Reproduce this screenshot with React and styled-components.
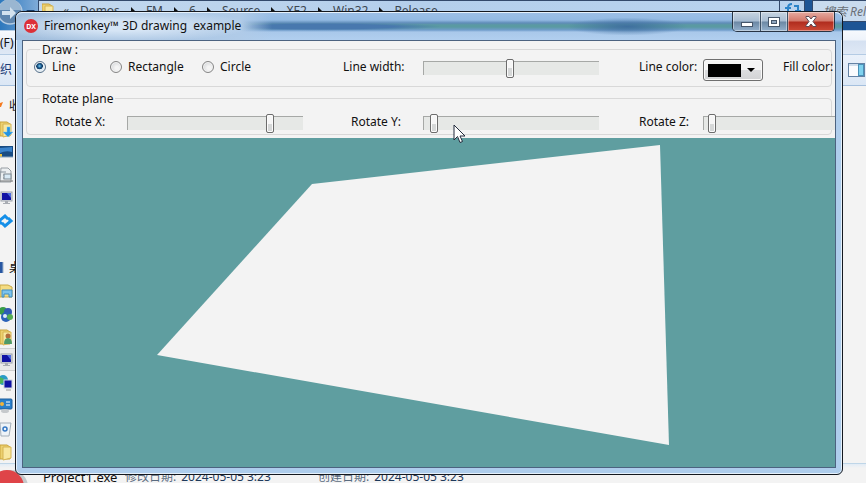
import React from 'react'
import styled, { createGlobalStyle } from 'styled-components'

const GlobalStyle = createGlobalStyle`
  * { box-sizing: border-box; }
  body {
    margin: 0;
    font-family: "Noto Sans", "Noto Sans CJK SC", sans-serif;
    font-size: 12px;
    line-height: 16px;
    color: #111;
  }
`

/* explorer window at the back */
const Desktop = styled.div`
  position: relative;
  display: flex;
  flex-direction: column;
  min-height: 100vh;
  overflow: hidden;
  background: #f3f3f3;
`
const AddressRow = styled.div`
  display: flex;
  align-items: flex-start;
  height: 31px;
  background: linear-gradient(90deg, #2d78bd 0, #7fabd8 38px, #7fabd8 60%, #1d5595 93%);
  border-bottom: 1px solid #b9cfe6;
`
const NavButton = styled.button`
  flex: none;
  width: 38px;
  height: 30px;
  padding: 0;
  border: 0;
  background: none;
`
const AddressBar = styled.nav`
  flex: 1;
  display: flex;
  align-items: center;
  height: 22px;
  padding-left: 3px;
  overflow: hidden;
  border: 1px solid #33496b;
  background: linear-gradient(90deg, #c3d8ee, #b4cfec 50%, #b9d3ee);
`
const Crumb = styled.a`
  margin-right: 11px;
  color: #3c4650;
  text-decoration: none;
  white-space: nowrap;
`
const Caret = styled.span`
  width: 0;
  height: 0;
  margin-right: 11px;
  border: 4px solid transparent;
  border-left-color: #111;
  border-right: 0;
`
const RefreshButton = styled.button`
  width: 25px;
  height: 20px;
  margin-left: auto;
  padding: 0;
  border: 0;
  border-left: 1px solid #33496b;
  background: none;
`
const SearchBox = styled.input`
  width: 54px;
  height: 22px;
  margin: 0 0 0 7px;
  padding: 0 0 0 10px;
  border: 1px solid #33496b;
  border-right: 0;
  background: #c9dbee;
  font: italic 12px "Noto Sans", "Noto Sans CJK SC", sans-serif;
  &::placeholder { color: #6a6f76; }
`
const MenuRow = styled.div`
  height: 23px;
  padding-top: 4px;
  background: linear-gradient(#f6f9fd 0, #eef3fa 9px, #d5e1f1 10px, #dfe8f5 100%);
`
const ToolRow = styled.div`
  display: flex;
  align-items: center;
  justify-content: space-between;
  height: 32px;
  padding-right: 1px;
  border-top: 1px solid #b4cbe4;
  border-bottom: 1px solid #a5c0de;
  background: linear-gradient(#eaf1fa, #dbe7f5);
  color: #1e3e78;
`
const PlainButton = styled.button`
  display: flex;
  padding: 0;
  border: 0;
  background: none;
  color: inherit;
  font: inherit;
`
const Places = styled.ul`
  flex: 1;
  width: 160px;
  margin: 0;
  padding: 8px 0 0;
  list-style: none;
`
const Place = styled.li`
  display: flex;
  align-items: center;
  gap: 2px;
  height: 23px;
  margin-top: ${p => (p.$group ? '24px' : '0')};
  background: ${p => (p.$selected ? '#e9e9e9' : 'none')};
  border: solid ${p => (p.$selected ? '#d0d0d0' : 'transparent')};
  border-width: 1px 0;
  svg { flex: none; }
`
const Details = styled.footer`
  display: flex;
  align-items: flex-end;
  height: 20px;
  border-top: 1px solid #bfd6e8;
  background: linear-gradient(#e2ecf6, #f3f3f3 4px);
  line-height: 12px;
  white-space: nowrap;
  svg { flex: none; margin-right: 14px; }
`
const FileName = styled.span`
  width: 82px;
  font-size: 13px;
`
const Stamp = styled.span`
  width: 193px;
  color: #1e395b;
`
const StampLabel = styled.span`
  margin-right: 5px;
  color: #5a6b80;
`

/* front window */
const Window = styled.main`
  position: absolute;
  inset: 11px 23px 8px 15px;
  display: flex;
  flex-direction: column;
  padding: 0 6px 6px;
  border: 1px solid #14181f;
  border-radius: 7px 7px 6px 6px;
  background: #aecdec;
  box-shadow: inset 0 0 0 1px #e6f1fb;
`
const TitleBar = styled.header`
  display: flex;
  align-items: center;
  height: 28px;
  margin: 0 -6px;
  padding: 0 7px 0 8px;
  border-radius: 6px 6px 0 0;
  box-shadow: inset 0 1px 0 #e6f1fb;
  background:
    radial-gradient(ellipse 130px 16px at 13% 50%, #d6e5f5 30%, transparent),
    linear-gradient(90deg, #a3bfdd 0, #b0cbe8 27%, transparent 31%),
    radial-gradient(ellipse 60px 9px at 74% 52%, #3f6f9f, transparent),
    radial-gradient(ellipse 120px 4px at 37% 52%, #4878ae 60%, transparent),
    linear-gradient(#9dbfe6 0, #93bae3 8px, #5f8cb8 11px, #5a9aa2 13px, #5a9aa2 15px, #6f9ccb 18px, #a9c8ea 20px, #b1cfef 100%);
`
const Title = styled.h1`
  flex: 1;
  margin: 0 0 0 6px;
  font-size: 12px;
  font-weight: 400;
  line-height: 16px;
  white-space: pre;
`
const Captions = styled.div`
  display: flex;
  align-self: flex-start;
  height: 20px;
  overflow: hidden;
  border: 1px solid #273444;
  border-top: 0;
  border-radius: 0 0 5px 5px;
`
const CaptionButton = styled.button`
  display: grid;
  place-items: center;
  width: ${p => (p.$close ? '47px' : '27px')};
  padding: 0;
  border: 0;
  border-left: ${p => (p.$first ? '0' : '1px solid #3e5166')};
  box-shadow: inset 0 0 0 1px rgba(255, 255, 255, 0.4);
  background: ${p => (p.$close
    ? 'linear-gradient(#e5aaa0, #d3796b 9px, #b02c1e 10px, #cc4a36 100%)'
    : 'linear-gradient(#c7d4e1, #a9bdd2 9px, #6c88a4 10px, #93b0cc 100%)')};
`
const Client = styled.div`
  flex: 1;
  display: flex;
  flex-direction: column;
  min-height: 0;
  overflow: hidden;
  border: 1px solid #4c6380;
  background: #f3f3f3;
`
const Panel = styled.form`
  display: flex;
  flex-direction: column;
  gap: 3px;
  padding: 0 3px 3px;
`
const Group = styled.fieldset`
  min-width: 0;
  margin: 0;
  padding: 0;
  border: 1px solid #d8d8d8;
  border-radius: 4px;
`
const Legend = styled.legend`
  margin-left: 13px;
  padding: 2px 2px 0;
  line-height: 14px;
`
const DrawRow = styled.div`
  display: grid;
  grid-template-columns: 76px 92px 141px 80px 176px 40px 64px 80px max-content;
  align-items: start;
  padding: 2px 0 5px 7px;
`
const RotateRow = styled.div`
  display: grid;
  grid-template-columns: 72px 176px 48px 72px 176px 40px 64px 176px;
  align-items: start;
  padding: 8px 0 2px 28px;
`
const Label = styled.label`
  display: flex;
  align-items: center;
  white-space: nowrap;
`
const Radio = styled.input.attrs({ type: 'radio' })`
  appearance: none;
  flex: none;
  width: 12px;
  height: 12px;
  margin: 0 6px 0 0;
  border: 1px solid #858585;
  border-radius: 50%;
  background: radial-gradient(circle at 60% 60%, #f4f4f4 20%, #c9cccf);
  box-shadow: inset 0 0 0 1px #f4f4f4;
  &:checked {
    border-color: #56708a;
    background: radial-gradient(circle at 45% 40%, #7fd0f0 0, #1c5f94 22%, #12385e 38%, #dcebf5 44%);
  }
`
const Slider = styled.input.attrs({ type: 'range', max: 168 })`
  appearance: none;
  width: 176px;
  height: 18px;
  margin: 0;
  background: none;
  &::-webkit-slider-runnable-track {
    height: 14px;
    border: solid #a6a8a6;
    border-width: 1px 0 0 1px;
    background: #e6e8e6;
  }
  &::-webkit-slider-thumb {
    appearance: none;
    width: 8px;
    height: 19px;
    margin-top: -3px;
    border: 1px solid #6c6c6c;
    border-radius: 2px;
    background: linear-gradient(#f6f6f6 50%, #d6d8d8 50%);
    box-shadow: inset 0 0 0 1px #fbfbfb;
  }
`
const ColorButton = styled.button`
  display: flex;
  align-items: center;
  justify-content: space-between;
  width: 60px;
  height: 22px;
  padding: 0 7px 0 4px;
  border: 1px solid #6f6f6f;
  border-radius: 3px;
  background: linear-gradient(#f4f4f4 50%, #dcdddf 50%, #d2d3d5);
  box-shadow: inset 0 0 0 1px #fafafa;
`
const Swatch = styled.span`
  width: 33px;
  height: 13px;
  background: ${p => p.$color};
`
const DropArrow = styled.span`
  border: 4px solid transparent;
  border-top-color: #000;
  border-bottom: 0;
`
const Scene = styled.svg`
  flex: 1;
  display: block;
  width: 100%;
  min-height: 0;
  background: #5f9ea0;
`
const Pointer = styled.svg`
  position: absolute;
  left: 437px;
  top: 112px;
  pointer-events: none;
`

const crumbs = ['Demos', 'FM', '6', 'Source', 'XE2', 'Win32', 'Release']

const Folder = () => (
  <g>
    <path d="M0 2h7l3 2v12H0z" fill="#ecd06f" stroke="#c9a33c" />
    <path d="M3 4h8v11l-8 2z" fill="#f8e7a0" stroke="#d6b452" />
  </g>
)
const Monitor = () => (
  <g>
    <rect x="1" y="3" width="11" height="9" fill="#e4e6ea" stroke="#9ba1ab" />
    <rect x="2" y="4" width="9" height="7" fill="#1012a4" />
    <path d="M7 4h4v5z" fill="#4c6be0" />
    <path d="M5 12h3v2h2v1H3v-1h2z" fill="#a9adb3" />
  </g>
)

const places = [
  { art: <path d="M0 6l3-1-2 5H0z" fill="#f47a20" />, text: '收' },
  { art: <g><Folder /><path d="M7 7h3v5h3l-5 5-5-5h4z" fill="#2492e0" stroke="#78c4f2" strokeWidth=".5" /></g> },
  { art: <g><path d="M0 3h13v11H0z" fill="#194c83" /><path d="M0 5l12-1v5q-6-2-12 1z" fill="#3a83cc" /><path d="M0 11h2v3H0z" fill="#efc33b" /><path d="M0 14h13" stroke="#8ba6c0" /></g> },
  { art: <g><path d="M1 2h7l3 3v11H0z" fill="#eceff1" stroke="#969da3" /><path d="M0 6h6M3 9h7M3 12h7" stroke="#88939c" /><rect x="4" y="8" width="7" height="5" fill="#d8e9f4" stroke="#7d8790" /><path d="M0 15h13" stroke="#777" /></g> },
  { art: <Monitor /> },
  { art: <g fill="none" stroke="#158fe8" strokeWidth="3"><path d="M8 7L5 4-1 9l3 3" /><path d="M2 11l3 3 6-5-3-3" /></g> },
  { group: true, art: <g><path d="M-2 3H3v11h-5z" fill="#2857a2" /><path d="M3 3v11" stroke="#9fb4cc" /></g>, text: '桌' },
  { art: <g><path d="M0 3h8l4 2v10H0z" fill="#f4dc83" stroke="#c8a847" /><path d="M2 8h10v7h-3v-3H4v3H2z" fill="#7cc3ec" stroke="#3f8dc2" /></g> },
  { art: <g><circle cx="3" cy="6" r="4" fill="#399d48" /><circle cx="8" cy="7" r="4" fill="#3159b3" /><circle cx="6" cy="12" r="5" fill="#2b61b8" /><circle cx="10" cy="12" r="3" fill="#55ad53" /><circle cx="5" cy="11" r="2" fill="#dfecfa" /></g> },
  { art: <g><Folder /><circle cx="8" cy="8" r="2.5" fill="#b06c3c" /><path d="M4 16q0-6 4-6t4 6z" fill="#4f9a68" /></g> },
  { selected: true, art: <Monitor /> },
  { art: <g><circle cx="3" cy="6" r="5" fill="#2a9bc6" /><path d="M0 3l4 2-1 4-3 1z" fill="#4fb55a" /><rect x="4" y="6" width="8" height="8" fill="#1012a4" stroke="#ccd3dd" /><path d="M6 16h5" stroke="#999" /></g> },
  { art: <g><rect x="-1" y="2" width="13" height="10" rx="1" fill="#2a80cc" stroke="#1e5c9a" /><circle cx="2" cy="7" r="2" fill="#f1b33c" /><path d="M6 5h4M6 8h4" stroke="#fff" /><ellipse cx="5" cy="14" rx="4" ry="2" fill="#c6c9cc" /></g> },
  { art: <g><path d="M0 3h11l-2 13H1z" fill="#eef3f8" stroke="#a4afba" /><circle cx="5" cy="9" r="2" fill="none" stroke="#3577c4" strokeWidth="1.5" /></g> },
  { art: <Folder /> }
]

class App extends React.Component {
  constructor(props) {
    super(props)
    this.state = { shape: 'Line' }
  }

  render() {
    return (
      <Desktop>
        <GlobalStyle />
        <AddressRow>
          <NavButton aria-label="Forward">
            <svg width="38" height="30" viewBox="0 0 38 30">
              <circle cx="10" cy="12" r="12" fill="#5e86af" stroke="#b4cbe2" strokeWidth="1.5" />
              <path d="M-1 10a11 11 0 0 1 22 0z" fill="#9ab6d1" />
              <path d="M2 11h8V7l6 6-6 6v-4H2z" fill="#d3e2ef" />
              <path d="M26 10h9l-4 4z" fill="#143d6c" />
            </svg>
          </NavButton>
          <AddressBar>
            <svg width="21" height="18" viewBox="0 0 21 18"><Folder /></svg>
            <Crumb href="#up">«</Crumb>
            {crumbs.map((name, i) => (
              <React.Fragment key={name}>
                {i > 0 && <Caret />}
                <Crumb href={'#' + name}>{name}</Crumb>
              </React.Fragment>
            ))}
            <RefreshButton aria-label="Refresh">
              <svg width="20" height="18" viewBox="0 0 20 18" fill="none" stroke="#2b83c8" strokeWidth="2">
                <path d="M10 3q-4 0-4 4v7M3 7h6M12 5h4v9M13 10h6" />
              </svg>
            </RefreshButton>
          </AddressBar>
          <SearchBox aria-label="Search" placeholder="搜索 Release" />
        </AddressRow>
        <MenuRow><PlainButton>(F)</PlainButton></MenuRow>
        <ToolRow>
          <PlainButton>织</PlainButton>
          <PlainButton aria-label="Preview pane">
            <svg width="17" height="14" viewBox="0 0 17 14">
              <rect x=".5" y=".5" width="16" height="13" fill="#fbfcfe" stroke="#6583a5" />
              <path d="M1 2h15" stroke="#aac3dc" />
              <rect x="10.5" y="1.5" width="5" height="11" fill="#80d2ef" stroke="#4a91b8" />
            </svg>
          </PlainButton>
        </ToolRow>
        <Places>
          {places.map((p, i) => (
            <Place key={i} $group={p.group} $selected={p.selected}>
              <svg width={p.text ? 7 : 14} height="18" viewBox={p.text ? '0 0 7 18' : '0 0 14 18'}>{p.art}</svg>
              {p.text}
            </Place>
          ))}
        </Places>
        <Details>
          <svg width="29" height="15" viewBox="0 0 29 15">
            <circle cx="11" cy="19" r="17" fill="#c4c8cb" />
            <circle cx="7" cy="19" r="17" fill="#df4448" />
          </svg>
          <FileName>Project1.exe</FileName>
          <Stamp><StampLabel>修改日期:</StampLabel>2024-05-05 3:23</Stamp>
          <Stamp><StampLabel>创建日期:</StampLabel>2024-05-05 3:23</Stamp>
        </Details>

        <Window>
          <TitleBar>
            <svg width="14" height="14" viewBox="0 0 14 14">
              <circle cx="7" cy="7" r="7" fill="#dc3038" />
              <text x="7" y="10" textAnchor="middle" fontSize="7" fontWeight="700" fill="#fff">DX</text>
            </svg>
            <Title>Firemonkey™ 3D drawing  example</Title>
            <Captions>
              <CaptionButton $first aria-label="Minimize">
                <svg width="12" height="14"><rect x=".5" y="7.5" width="11" height="4" fill="#fff" stroke="#46566a" /></svg>
              </CaptionButton>
              <CaptionButton aria-label="Maximize">
                <svg width="12" height="10">
                  <rect x=".5" y=".5" width="11" height="9" fill="#fff" stroke="#46566a" />
                  <rect x="3.5" y="3.5" width="5" height="3" fill="#8fa6bf" stroke="#46566a" />
                </svg>
              </CaptionButton>
              <CaptionButton $close aria-label="Close">
                <svg width="12" height="11" viewBox="0 0 12 11">
                  <path d="M1 .5h3l2 2.5 2-2.5h3v1L8 5.5l3 4v1H8L6 8l-2 2.5H1v-1l3-4-3-4z" fill="#fff" stroke="#5b4a55" />
                </svg>
              </CaptionButton>
            </Captions>
          </TitleBar>
          <Client>
            <Panel>
              <Group>
                <Legend>Draw :</Legend>
                <DrawRow>
                  {['Line', 'Rectangle', 'Circle'].map(shape => (
                    <Label key={shape}>
                      <Radio
                        name="shape"
                        checked={this.state.shape === shape}
                        onChange={() => this.setState({ shape })}
                      />
                      {shape}
                    </Label>
                  ))}
                  <Label htmlFor="lineWidth">Line width:</Label>
                  <Slider id="lineWidth" defaultValue={82} />
                  <span />
                  <Label htmlFor="lineColor">Line color:</Label>
                  <ColorButton type="button" id="lineColor">
                    <Swatch $color="#000" />
                    <DropArrow />
                  </ColorButton>
                  <Label as="span">Fill color:</Label>
                </DrawRow>
              </Group>
              <Group>
                <Legend>Rotate plane</Legend>
                <RotateRow>
                  <Label htmlFor="rotateX">Rotate X:</Label>
                  <Slider id="rotateX" defaultValue={139} />
                  <span />
                  <Label htmlFor="rotateY">Rotate Y:</Label>
                  <Slider id="rotateY" defaultValue={6} />
                  <span />
                  <Label htmlFor="rotateZ">Rotate Z:</Label>
                  <Slider id="rotateZ" defaultValue={4} />
                </RotateRow>
              </Group>
            </Panel>
            <Scene viewBox="0 0 812 329" preserveAspectRatio="none">
              <polygon points="637,7 646,307 134,217 289,46" fill="#f3f3f3" />
            </Scene>
          </Client>
          <Pointer width="13" height="20" viewBox="0 0 13 20">
            <path d="M1 1v15l3.500-3.500 2.500 6 2.500-1-2.500-5.500h5z" fill="#fff" stroke="#222b3c" />
          </Pointer>
        </Window>
      </Desktop>
    )
  }
}

export default App
